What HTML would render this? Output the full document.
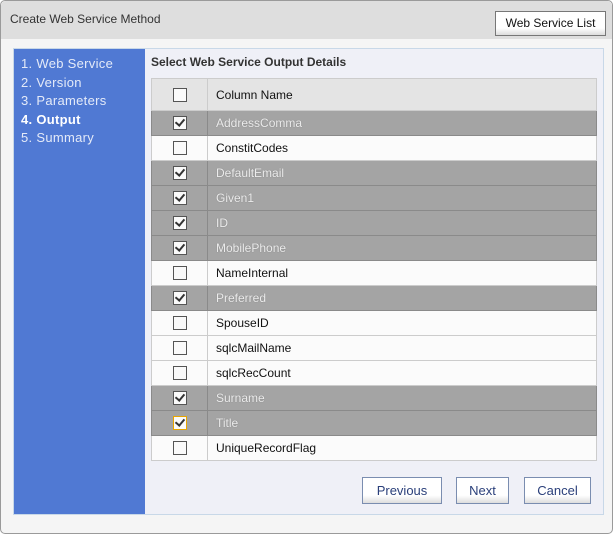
<!DOCTYPE html>
<html><head><style>
*{box-sizing:border-box;margin:0;padding:0}
body{width:614px;height:535px;background:#fff;font-family:"Liberation Sans",Arial,sans-serif;position:relative;overflow:hidden}
.outer{position:absolute;left:0;top:0;width:613px;height:534px;border:1px solid #9a9a9a;border-radius:5px;background:#f5f5f5}
.hdr{position:absolute;left:0;top:0;width:611px;height:38px;background:#dedede;border-radius:5px 5px 0 0}
.title{position:absolute;left:9px;top:11px;font-size:12px;color:#333}
.btn{position:absolute;border:1px solid #7a8db0;background:linear-gradient(#fff 0,#fff 70%,#ddd 100%);font-size:13px;color:#2a3f7a;text-align:center}
.wsl{left:494px;top:10px;width:111px;height:25px;border:1px solid #777;color:#111;font-size:12px;line-height:23px}
.inner{position:absolute;left:12px;top:47px;width:591px;height:467px;border:1px solid #c8d8e8;background:#eff0f7}
.side{position:absolute;left:0;top:0;width:131px;height:465px;background:#5079d3;padding-top:7px}
.side div{color:#e4eaf8;font-size:13px;height:18.5px;padding-left:7px;letter-spacing:0.3px}
.side b{color:#fff}
.sel{position:absolute;left:137px;top:6px;font-size:12px;font-weight:bold;color:#333}
table{position:absolute;left:137px;top:29px;width:446px;border-collapse:collapse;border:1px solid #999;font-size:12px}
td{height:25px;border:1px solid #ccc;padding-left:8px}
td:first-child{width:56px;padding:0;text-align:center}
tr.h td{height:32px;background:#e4e4e4;color:#111;border-color:#ccc}
tr.g td{background:#a4a4a4;color:#ececec;border-color:#8a8a8a;text-shadow:0 0 1px #777}
tr.w td{background:#fbfbfb;color:#111}
.cb{display:inline-block;width:14px;height:14px;border:1px solid #555;background:#fafafa;vertical-align:middle;position:relative}
.cb.o{border-color:#e8a500}
.cb.c::after{content:"";position:absolute;left:3px;top:0px;width:4px;height:7px;border:solid #333;border-width:0 2px 2px 0;transform:rotate(40deg)}
</style></head><body>
<div class="outer">
<div class="hdr"></div>
<div class="title">Create Web Service Method</div>
<div class="btn wsl">Web Service List</div>
<div class="inner">
<div class="side"><div>1. Web Service</div><div>2. Version</div><div>3. Parameters</div><div><b>4. Output</b></div><div>5. Summary</div></div>
<div class="sel">Select Web Service Output Details</div>
<table>
<tr class="h"><td><span class="cb"></span></td><td>Column Name</td></tr>
<tr class="g"><td><span class="cb c"></span></td><td>AddressComma</td></tr>
<tr class="w"><td><span class="cb"></span></td><td>ConstitCodes</td></tr>
<tr class="g"><td><span class="cb c"></span></td><td>DefaultEmail</td></tr>
<tr class="g"><td><span class="cb c"></span></td><td>Given1</td></tr>
<tr class="g"><td><span class="cb c"></span></td><td>ID</td></tr>
<tr class="g"><td><span class="cb c"></span></td><td>MobilePhone</td></tr>
<tr class="w"><td><span class="cb"></span></td><td>NameInternal</td></tr>
<tr class="g"><td><span class="cb c"></span></td><td>Preferred</td></tr>
<tr class="w"><td><span class="cb"></span></td><td>SpouseID</td></tr>
<tr class="w"><td><span class="cb"></span></td><td>sqlcMailName</td></tr>
<tr class="w"><td><span class="cb"></span></td><td>sqlcRecCount</td></tr>
<tr class="g"><td><span class="cb c"></span></td><td>Surname</td></tr>
<tr class="g"><td><span class="cb c o"></span></td><td>Title</td></tr>
<tr class="w"><td><span class="cb"></span></td><td>UniqueRecordFlag</td></tr>
</table>
</div>
<div class="btn" style="left:361px;top:476px;width:80px;height:27px;line-height:25px">Previous</div>
<div class="btn" style="left:455px;top:476px;width:53px;height:27px;line-height:25px">Next</div>
<div class="btn" style="left:523px;top:476px;width:67px;height:27px;line-height:25px">Cancel</div>
</div>
</body></html>
